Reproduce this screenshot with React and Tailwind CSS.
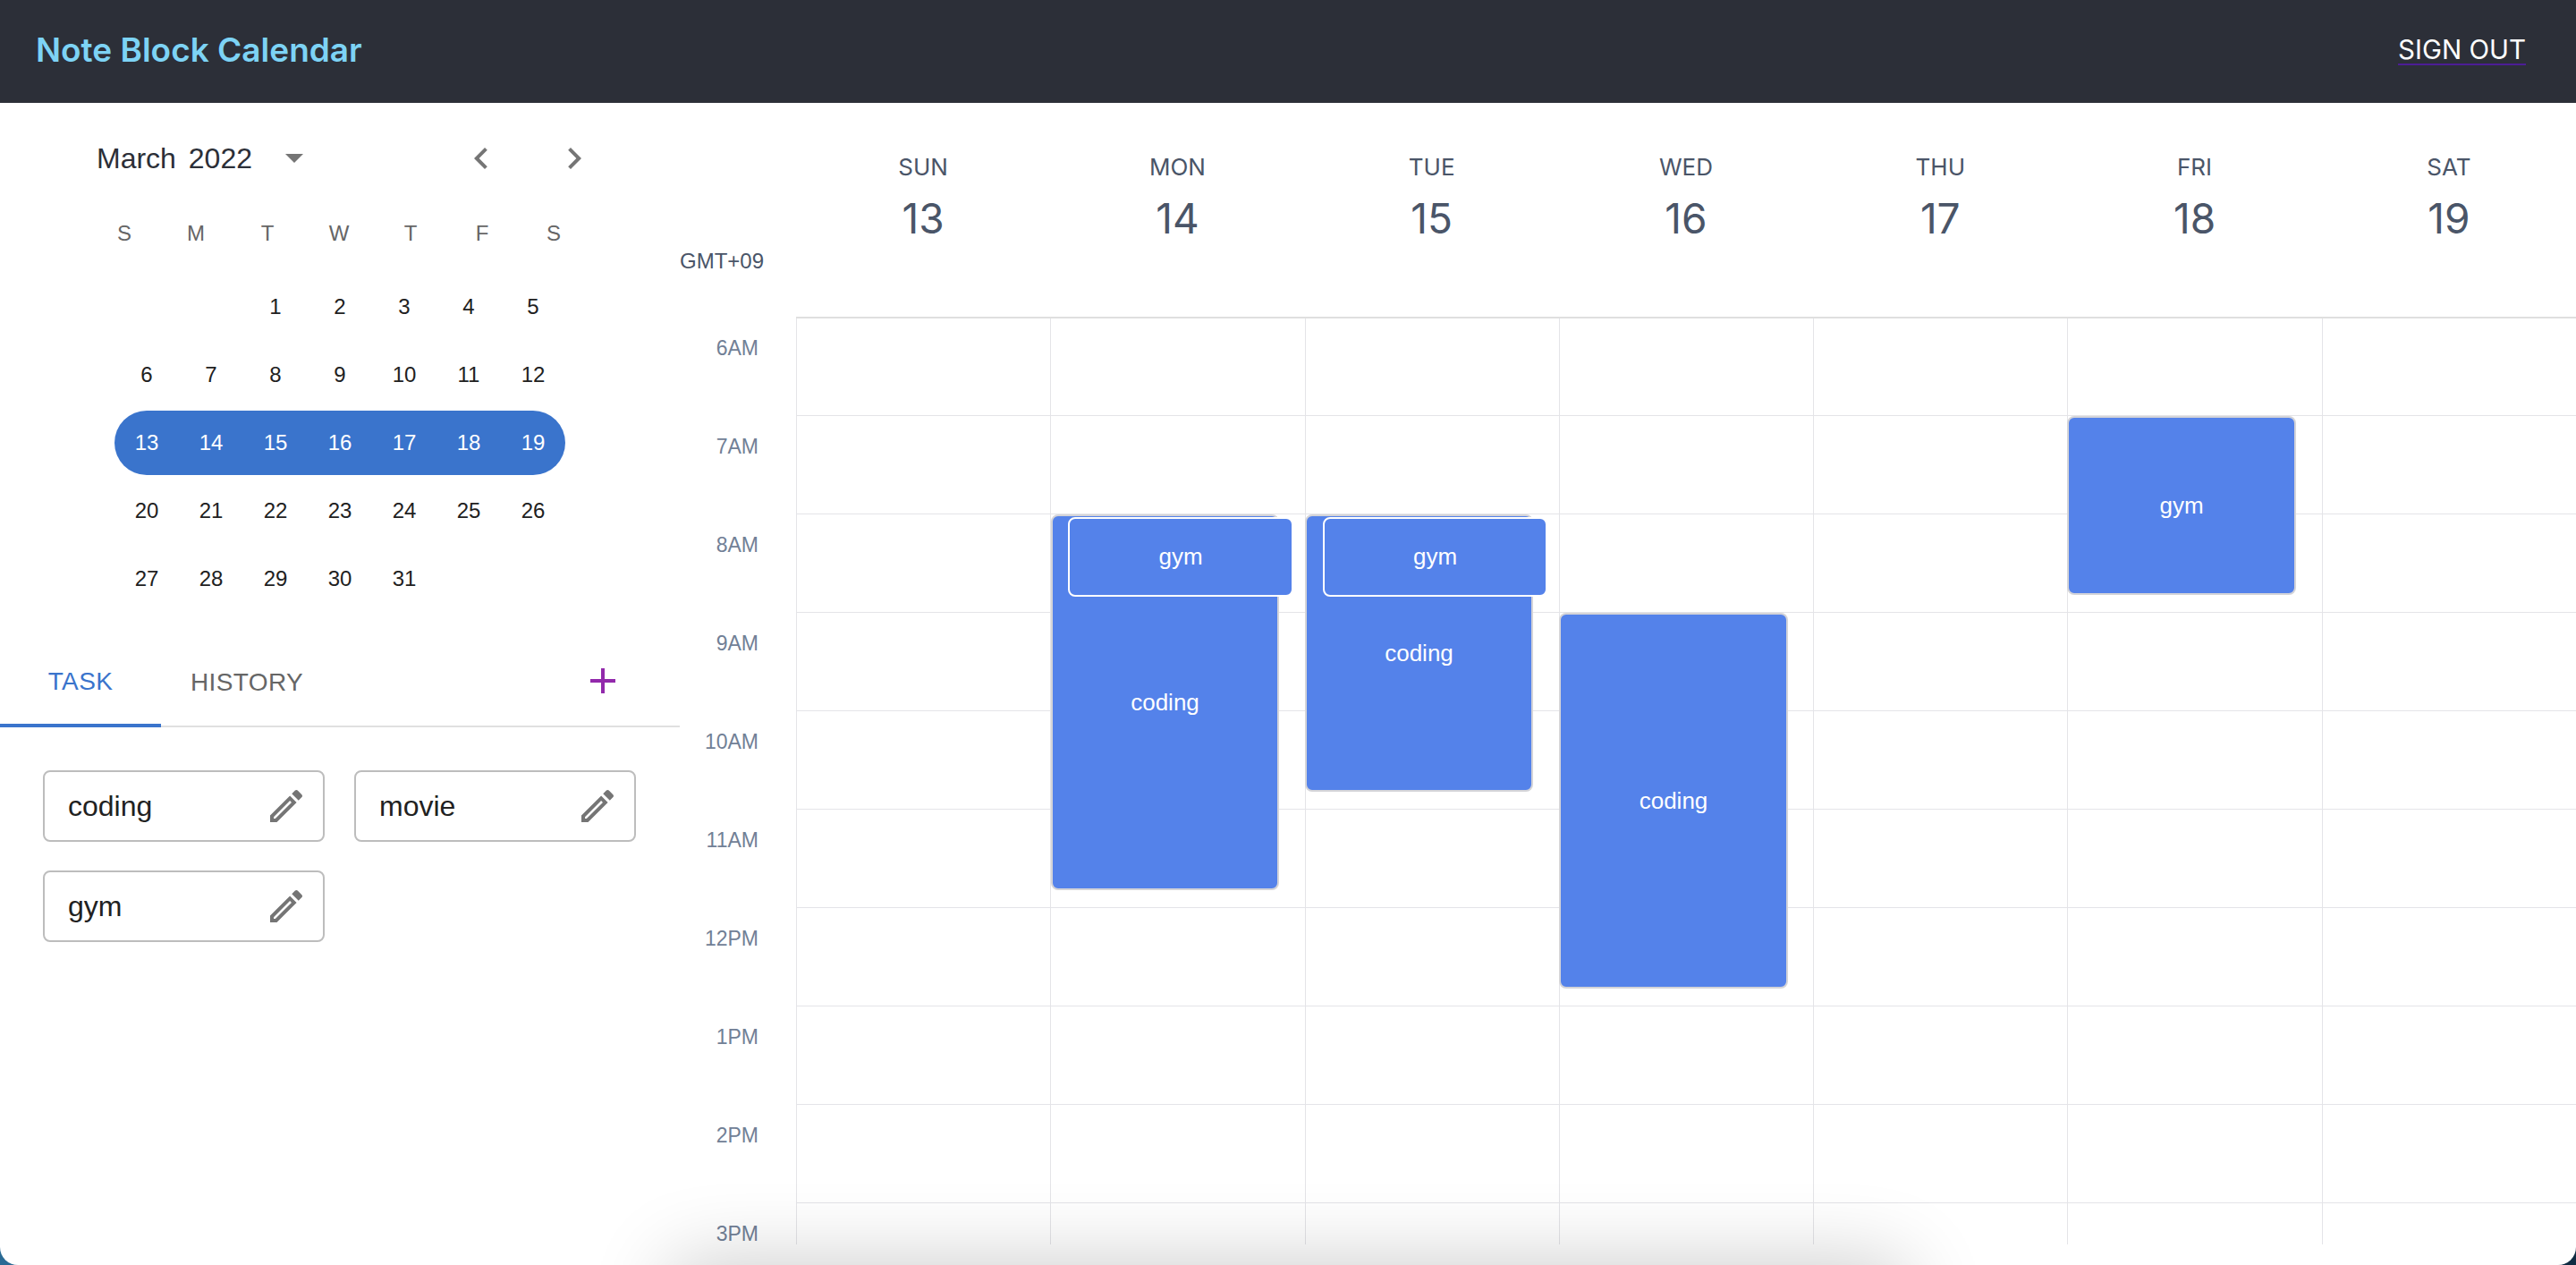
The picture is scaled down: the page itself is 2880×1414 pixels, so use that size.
const weekdays = ['S', 'M', 'T', 'W', 'T', 'F', 'S'];
const weeks = [
  ['', '', 1, 2, 3, 4, 5],
  [6, 7, 8, 9, 10, 11, 12],
  [13, 14, 15, 16, 17, 18, 19],
  [20, 21, 22, 23, 24, 25, 26],
  [27, 28, 29, 30, 31, '', ''],
];
const columns = [
  ['SUN', 13],
  ['MON', 14],
  ['TUE', 15],
  ['WED', 16],
  ['THU', 17],
  ['FRI', 18],
  ['SAT', 19],
];
const hours = ['6AM', '7AM', '8AM', '9AM', '10AM', '11AM', '12PM', '1PM', '2PM', '3PM'];

function PencilIcon() {
  return (
    <svg viewBox="0 0 24 24" className="w-12 h-12 fill-[#757575]">
      <path d="M14.06 9.02l.92.92L5.92 19H5v-.92l9.06-9.06M17.66 3c-.25 0-.51.1-.7.29l-1.83 1.83 3.75 3.75 1.83-1.83c.39-.39.39-1.02 0-1.41l-2.34-2.34c-.2-.2-.45-.29-.71-.29zm-3.6 3.19L3 17.25V21h3.75L17.81 9.94l-3.75-3.75z" />
    </svg>
  );
}

function TaskChip({ name }) {
  return (
    <div className="h-20 flex items-center justify-between pl-[26px] pr-[17px] rounded-lg border-2 border-[#bdbdbd] text-[32px] text-[#212121]">
      <span>{name}</span>
      <PencilIcon />
    </div>
  );
}

function MiniCalendar() {
  return (
    <div>
      <div className="mt-[26px] h-[72px] flex items-center pl-[108px]">
        <span className="w-[211px] text-[32px] text-[#2c2f38] [word-spacing:5px]">March 2022</span>
        <span className="w-0 h-0 border-x-[10px] border-t-[10px] border-x-transparent border-t-[#757575]" />
        <svg viewBox="0 0 24 24" className="ml-[175px] w-12 h-12 fill-[#757575]">
          <path d="M15.41 7.41L14 6l-6 6 6 6 1.41-1.41L10.83 12z" />
        </svg>
        <svg viewBox="0 0 24 24" className="ml-[56px] w-12 h-12 fill-[#757575]">
          <path d="M10 6L8.59 7.41 13.17 12l-4.58 4.59L10 18l6-6z" />
        </svg>
      </div>
      <div className="mt-6 ml-[99px] w-[560px] h-12 grid grid-cols-7 items-center text-center text-2xl text-[#666666]">
        {weekdays.map((d, i) => (
          <span key={i}>{d}</span>
        ))}
      </div>
      <div className="mt-[22px] ml-[128px] w-[504px] flex flex-col gap-1 text-2xl text-[#212121]">
        {weeks.map((week, i) => (
          <div
            key={i}
            className={
              i === 2
                ? 'h-[72px] grid grid-cols-7 items-center text-center rounded-full bg-[#3a74cc] text-white'
                : 'h-[72px] grid grid-cols-7 items-center text-center'
            }
          >
            {week.map((day, j) => (
              <span key={j}>{day}</span>
            ))}
          </div>
        ))}
      </div>
    </div>
  );
}

function Sidebar() {
  return (
    <aside className="w-[760px] shrink-0">
      <MiniCalendar />
      <div className="mt-8 h-[98px] flex border-b-2 border-[#e0e0e0] text-[28px] tracking-[0.4px]">
        <div className="w-[180px] flex items-center justify-center border-b-4 border-[#3a74cc] text-[#3a74cc] -mb-0.5">TASK</div>
        <div className="w-[192px] flex items-center justify-center text-[#666666]">HISTORY</div>
        <div className="ml-auto mr-[62px] w-12 flex items-center justify-center pb-1 text-[#9229ab]">
          <svg viewBox="0 0 28 28" className="w-7 h-7 stroke-current" strokeWidth="4">
            <path d="M14 0v28M0 14h28" />
          </svg>
        </div>
      </div>
      <div className="mt-12 ml-12 grid grid-cols-[315px_315px] gap-y-8 gap-x-[33px]">
        <TaskChip name="coding" />
        <TaskChip name="movie" />
        <TaskChip name="gym" />
      </div>
    </aside>
  );
}

function EventBlock({ className, label }) {
  return (
    <div className={'absolute flex items-center justify-center rounded-lg bg-[#5482ea] text-[26px] text-white border-2 ' + className}>
      {label}
    </div>
  );
}

function WeekView() {
  return (
    <section className="flex-1 flex flex-col">
      <div className="h-[239px] flex">
        <div className="w-[130px] shrink-0 pt-[165px] text-right pr-10 text-2xl leading-6 text-[#4a5568]">GMT+09</div>
        <div className="flex-1 grid grid-cols-7 h-full">
          {columns.map(([name, date]) => (
            <div key={name} className="flex flex-col items-center pt-[57px] text-[#4a5568] font-['Inter',sans-serif]">
              <span className="text-[26px] leading-[30px]">{name}</span>
              <span className="mt-[14px] text-[46px] leading-[56px]">{date}</span>
            </div>
          ))}
        </div>
      </div>
      <div className="h-[1037px] flex overflow-hidden">
        <div className="w-[130px] shrink-0 pt-0.5">
          {hours.map((h) => (
            <div key={h} className="h-[110px] pt-[21px] pr-[42px] text-right text-[23px] leading-6 text-[#718096]">
              {h}
            </div>
          ))}
        </div>
        <div className="relative flex-1 border-t-2 border-[#dfdfdf]">
          <div className="grid grid-cols-7 grid-rows-[109px] auto-rows-[110px]">
            {Array.from({ length: 70 }, (_, i) => (
              <div key={i} className="border-l border-b border-[#e4e4e8]" />
            ))}
          </div>
          <EventBlock className="left-[285px] top-[219px] w-[255px] h-[420px] border-[#d4d4d8]" label="coding" />
          <EventBlock className="left-[304px] top-[222px] w-[252px] h-[89px] border-white" label="gym" />
          <EventBlock className="left-[569px] top-[219px] w-[255px] h-[310px] border-[#d4d4d8]" label="coding" />
          <EventBlock className="left-[589px] top-[222px] w-[251px] h-[89px] border-white" label="gym" />
          <EventBlock className="left-[853px] top-[329px] w-[256px] h-[420px] border-[#d4d4d8]" label="coding" />
          <EventBlock className="left-[1421px] top-[109px] w-[256px] h-[200px] border-[#d4d4d8]" label="gym" />
        </div>
      </div>
    </section>
  );
}

export default function App() {
  return (
    <div className="relative w-[2880px] h-[1414px] overflow-hidden bg-gradient-to-r from-[#2a6a94] to-[#0f2b42] font-['Liberation_Sans',sans-serif]">
      <div className="relative h-full overflow-hidden rounded-b-[20px] bg-white">
        <header className="h-[115px] flex items-center justify-between pl-10 pr-[56px] bg-[#2c2f38] font-['Inter',sans-serif]">
          <h1 className="pb-1 text-[37px] font-semibold text-[#7dd3f5]">Note Block Calendar</h1>
          <span className="mb-1 text-[29.5px] text-white border-b-2 border-[#4c1d95] leading-[32px]">SIGN OUT</span>
        </header>
        <main className="flex">
          <Sidebar />
          <WeekView />
        </main>
        <div className="absolute top-[1450px] left-[790px] w-[1300px] h-10 shadow-[0_0_90px_40px_rgba(0,0,0,0.2)]" />
      </div>
    </div>
  );
}
